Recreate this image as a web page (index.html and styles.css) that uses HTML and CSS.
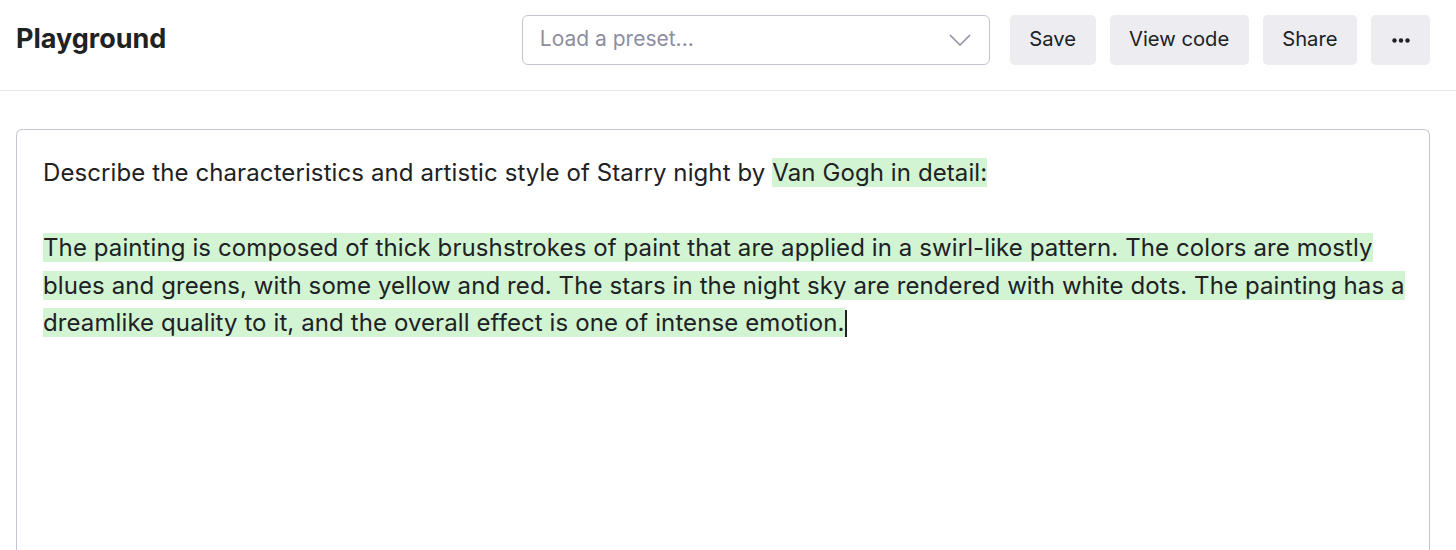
FILE: index.html
```html
<!DOCTYPE html>
<html lang="en">
<head>
<meta charset="utf-8">
<title>Playground</title>
<link rel="stylesheet" href="styles.css">
</head>
<body>
<header class="topbar">
  <h1 class="title">Playground</h1>
  <div class="actions">
    <div class="select">
      <span class="select-text">Load a preset...</span>
      <svg class="chev" width="22" height="12" viewBox="0 0 22 12"><path d="M1 1 L11 11 L21 1" fill="none" stroke="#8e8ea0" stroke-width="1.5"/></svg>
    </div>
    <button class="btn">Save</button>
    <button class="btn">View code</button>
    <button class="btn">Share</button>
    <button class="btn btn-more"><svg width="18" height="5" viewBox="0 0 18 5"><circle cx="2.5" cy="2.5" r="2.2" fill="#202123"/><circle cx="9" cy="2.5" r="2.2" fill="#202123"/><circle cx="15.5" cy="2.5" r="2.2" fill="#202123"/></svg></button>
  </div>
</header>
<main class="main">
  <div class="editor">
    <p class="line">Describe the characteristics and artistic style of Starry night by <span class="hl">Van Gogh in detail:</span></p>
    <p class="line">&nbsp;</p>
    <p class="line"><span class="hl">The painting is composed of thick brushstrokes of paint that are applied in a swirl-like pattern. The colors are mostly </span></p>
    <p class="line"><span class="hl">blues and greens, with some yellow and red. The stars in the night sky are rendered with white dots. The painting has a </span></p>
    <p class="line"><span class="hl">dreamlike quality to it, and the overall effect is one of intense emotion.</span><span class="caret"></span></p>
  </div>
</main>
</body>
</html>
```
FILE: styles.css
```css
* { box-sizing: border-box; }
html, body { margin: 0; padding: 0; background: #fff; }
body { font-family: Inter, "Noto Sans", sans-serif; color: #202123; overflow: hidden; height: 550px; }
.topbar {
  height: 91px;
  border-bottom: 1px solid #e5e5ea;
  display: flex;
  align-items: flex-start;
  justify-content: space-between;
  padding: 15px 26px 0 16px;
}
.title { margin: 0; font-size: 27px; line-height: 48px; font-weight: 700; }
.actions { display: flex; align-items: center; gap: 14px; }
.select {
  width: 468px; height: 50px;
  border: 1px solid #c5c5d2; border-radius: 6px;
  display: flex; align-items: center; justify-content: space-between;
  padding: 0 18px 0 17px;
  margin-right: 6px;
}
.select-text { color: #8e8ea0; font-size: 21px; padding-bottom: 3px; }
.chev { width: 22px; height: 12px; }
.btn {
  height: 50px; border: 0; border-radius: 5px; background: #ececf1;
  font-family: inherit; font-size: 20.2px; color: #202123;
  padding: 0 19.5px 3px;
  display: flex; align-items: center;
}
.btn-more { width: 59px; justify-content: center; padding: 0; }
.main { padding: 38px 26px 0 16px; }
.editor {
  border: 1px solid #c5c5d2; border-bottom: 0; border-radius: 6px 6px 0 0;
  height: 421px;
  padding: 24px 26px 0;
  overflow: hidden;
}
.line { margin: 0; font-size: 24px; line-height: 37.5px; letter-spacing: 0.1px; white-space: nowrap; }
.hl { background: #d2f4d3; }
.caret { display: inline-block; width: 2px; height: 27px; background: #202123; vertical-align: -6px; }
```
